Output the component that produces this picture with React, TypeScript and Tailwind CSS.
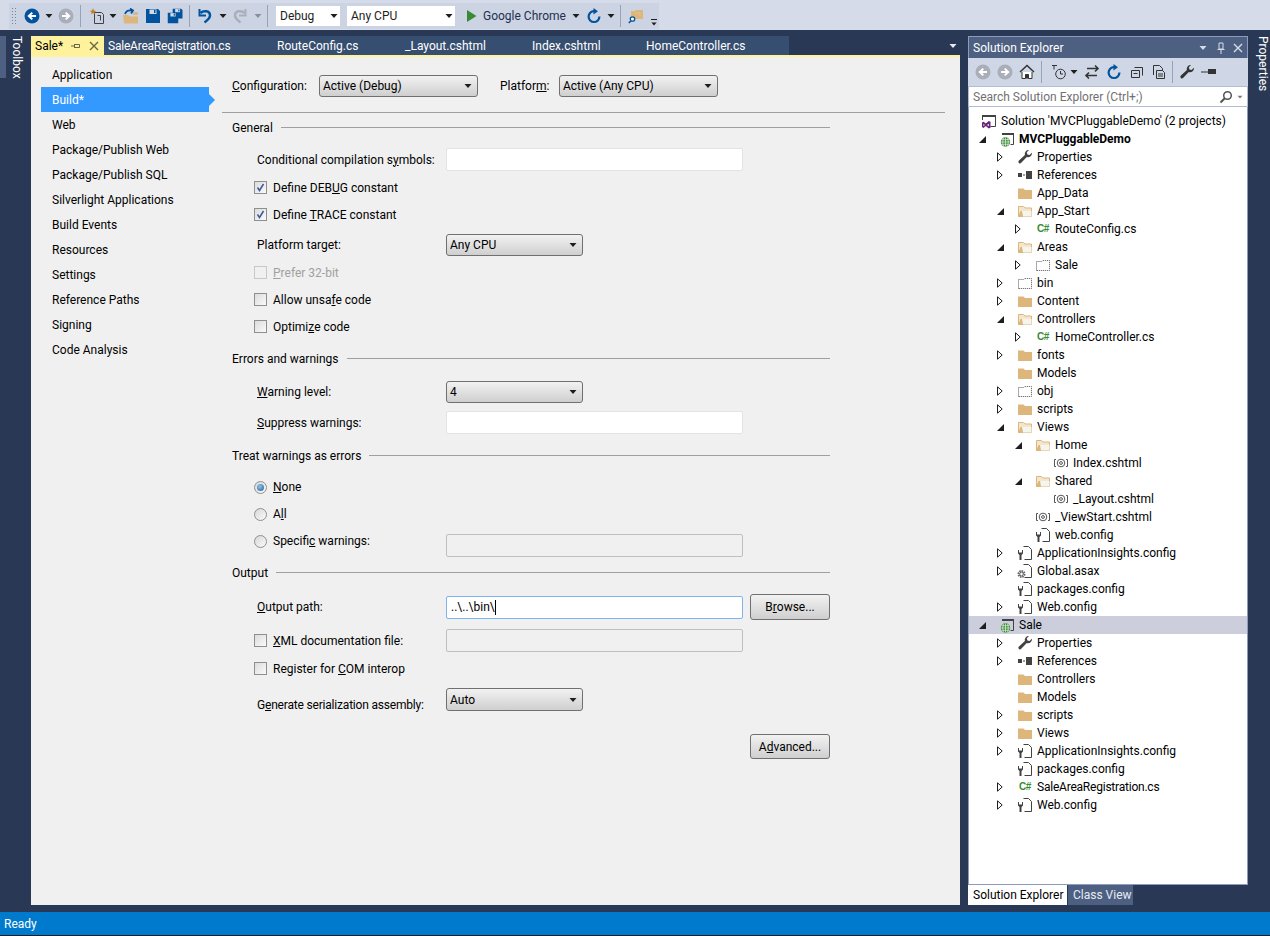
import type { ReactNode } from 'react';

type Kind = 'project' | 'wrench' | 'refs' | 'folder' | 'open' | 'cs' | 'dotted' | 'cshtml' | 'config' | 'asax' | 'solution';
type Arrow = 'open' | 'closed' | null;

interface TreeRow {
  depth: number;
  label: string;
  kind: Kind;
  arrow: Arrow;
  bold?: boolean;
  selected?: boolean;
  tight?: boolean;
}

const TREE: TreeRow[] = [
  { depth: -1, label: "Solution 'MVCPluggableDemo' (2 projects)", kind: 'solution', arrow: null },
  { depth: 0, label: 'MVCPluggableDemo', kind: 'project', arrow: 'open', bold: true },
  { depth: 1, label: 'Properties', kind: 'wrench', arrow: 'closed' },
  { depth: 1, label: 'References', kind: 'refs', arrow: 'closed' },
  { depth: 1, label: 'App_Data', kind: 'folder', arrow: null },
  { depth: 1, label: 'App_Start', kind: 'open', arrow: 'open' },
  { depth: 2, label: 'RouteConfig.cs', kind: 'cs', arrow: 'closed' },
  { depth: 1, label: 'Areas', kind: 'open', arrow: 'open' },
  { depth: 2, label: 'Sale', kind: 'dotted', arrow: 'closed' },
  { depth: 1, label: 'bin', kind: 'dotted', arrow: 'closed' },
  { depth: 1, label: 'Content', kind: 'folder', arrow: 'closed' },
  { depth: 1, label: 'Controllers', kind: 'open', arrow: 'open' },
  { depth: 2, label: 'HomeController.cs', kind: 'cs', arrow: 'closed' },
  { depth: 1, label: 'fonts', kind: 'folder', arrow: 'closed' },
  { depth: 1, label: 'Models', kind: 'folder', arrow: null },
  { depth: 1, label: 'obj', kind: 'dotted', arrow: 'closed' },
  { depth: 1, label: 'scripts', kind: 'folder', arrow: 'closed' },
  { depth: 1, label: 'Views', kind: 'open', arrow: 'open' },
  { depth: 2, label: 'Home', kind: 'open', arrow: 'open' },
  { depth: 3, label: 'Index.cshtml', kind: 'cshtml', arrow: null },
  { depth: 2, label: 'Shared', kind: 'open', arrow: 'open' },
  { depth: 3, label: '_Layout.cshtml', kind: 'cshtml', arrow: null },
  { depth: 2, label: '_ViewStart.cshtml', kind: 'cshtml', arrow: null },
  { depth: 2, label: 'web.config', kind: 'config', arrow: null },
  { depth: 1, label: 'ApplicationInsights.config', kind: 'config', arrow: 'closed' },
  { depth: 1, label: 'Global.asax', kind: 'asax', arrow: 'closed' },
  { depth: 1, label: 'packages.config', kind: 'config', arrow: null },
  { depth: 1, label: 'Web.config', kind: 'config', arrow: 'closed' },
  { depth: 0, label: 'Sale', kind: 'project', arrow: 'open', selected: true },
  { depth: 1, label: 'Properties', kind: 'wrench', arrow: 'closed' },
  { depth: 1, label: 'References', kind: 'refs', arrow: 'closed' },
  { depth: 1, label: 'Controllers', kind: 'folder', arrow: null },
  { depth: 1, label: 'Models', kind: 'folder', arrow: null },
  { depth: 1, label: 'scripts', kind: 'folder', arrow: 'closed' },
  { depth: 1, label: 'Views', kind: 'folder', arrow: 'closed' },
  { depth: 1, label: 'ApplicationInsights.config', kind: 'config', arrow: 'closed' },
  { depth: 1, label: 'packages.config', kind: 'config', arrow: null },
  { depth: 1, label: 'SaleAreaRegistration.cs', kind: 'cs', arrow: 'closed', tight: true },
  { depth: 1, label: 'Web.config', kind: 'config', arrow: 'closed' },
];

const NAV = [
  'Application', 'Build*', 'Web', 'Package/Publish Web', 'Package/Publish SQL', 'Silverlight Applications',
  'Build Events', 'Resources', 'Settings', 'Reference Paths', 'Signing', 'Code Analysis',
];

const BLUE = '#00539c';
const GREY = '#a9aeb8';
const TAN = '#dcb67a';

function Ico({ children, className = '' }: { children: ReactNode; className?: string }) {
  return (
    <svg viewBox="0 0 16 16" width="16" height="16" className={`shrink-0 ${className}`}>
      {children}
    </svg>
  );
}

function Caret({ className = '', color = '#1e1e1e' }: { className?: string; color?: string }) {
  return (
    <svg viewBox="0 0 8 4" width="8" height="4" className={`shrink-0 ${className}`}>
      <path d="M0.5 0H7.5L4 4Z" fill={color} />
    </svg>
  );
}

function CircleArrow({ color, dir }: { color: string; dir: 'left' | 'right' }) {
  return (
    <>
      <circle cx="8" cy="8" r="7.5" fill={color} />
      <path
        d={dir === 'left' ? 'M12 8H5.5M8.3 4.6 4.8 8l3.5 3.4' : 'M4 8h6.5M7.7 4.6 11.2 8l-3.5 3.4'}
        fill="none"
        stroke="#fff"
        strokeWidth="2"
      />
    </>
  );
}

function Floppy({ x = 0, y = 0, s = 1 }: { x?: number; y?: number; s?: number }) {
  return (
    <g transform={`translate(${x} ${y}) scale(${s})`}>
      <path d="M1 1h12l2 2v12H1Z" fill={BLUE} />
      <path d="M4.5 1.5h7v4.5h-7Z" fill="#d3dbe9" />
      <path d="M9 2h1.5v3H9Z" fill={BLUE} />
    </g>
  );
}

function RefreshIcon() {
  return (
    <>
      <path d="M8 3.200A5.400 5.400 0 1 0 13.400 8.600" fill="none" stroke={BLUE} strokeWidth="2.200" />
      <path d="M7.500 0v6.500L12 3.200Z" fill={BLUE} />
    </>
  );
}

function Sep({ className = '' }: { className?: string }) {
  return <div className={`w-px h-[22px] bg-[#9aa3b5] shrink-0 ${className}`} />;
}

function WrenchPath({ color = '#424242' }: { color?: string }) {
  return (
    <path
      d="M15 4.2a3.9 3.9 0 0 1-5.2 3.7L4 14a1.6 1.6 0 0 1-2.3-2.2L7.9 6A3.9 3.9 0 0 1 12 1l-2.2 2.2.6 2.2 2.2.6L14.800 3.800Z"
      fill={color}
    />
  );
}

function PageOutline() {
  return <path d="M6.500 1.500h5l3 3v10h-7" fill="#fff" stroke="#424242" strokeWidth="1" />;
}

function TreeIcon({ kind }: { kind: Kind }) {
  switch (kind) {
    case 'solution':
      return (
        <Ico>
          <path d="M1.500 7V2.500h13v11h-5" fill="none" stroke="#424242" />
          <path d="M1 2h14v2H1Z" fill="#424242" />
          <path
            fillRule="evenodd"
            d="M1 9.500l1.500-.8 2.300 1.800 3-2.500 1.700.8v6l-1.700.8-3-2.500-2.300 1.800-1.500-.8ZM2.500 10.800v2.400l1.300-1.200ZM6 12l1.800 1.300v-2.600Z"
            fill="#68217a"
          />
        </Ico>
      );
    case 'project':
      return (
        <Ico>
          <path d="M3.500 2.500h11v11h-3" fill="none" stroke="#424242" />
          <path d="M3 2h12v2H3Z" fill="#424242" />
          <circle cx="6.500" cy="11" r="4.700" fill="#388a34" />
          <path d="M2 11h9M2.800 8.700h7.400M2.800 13.300h7.400M6.500 6.500v9M4.500 7c-1 2.500-1 5.500 0 8M8.500 7c1 2.500 1 5.500 0 8" stroke="#fff" strokeWidth="0.6" fill="none" />
        </Ico>
      );
    case 'wrench':
      return <Ico><WrenchPath /></Ico>;
    case 'refs':
      return (
        <Ico>
          <path d="M1 6h4v4H1Zm8-2h6v8H9Z" fill="#424242" />
          <path d="M6 8h2" stroke="#424242" />
        </Ico>
      );
    case 'folder':
      return (
        <Ico>
          <path d="M1 3.500h5.500l1.500 1.500h7v9H1Z" fill={TAN} />
        </Ico>
      );
    case 'open':
      return (
        <Ico>
          <path d="M1.500 13.500v-10h5l1.500 1.500h6.500v8.500Z" fill="#f3e6cf" stroke={TAN} />
          <path d="M1 14l2.500-6H11l3 0-2 6Z" fill={TAN} />
          <path d="M5 8h9.500v5.500H6Z" fill="#f5f5f0" />
        </Ico>
      );
    case 'cs':
      return (
        <div className="w-4 h-4 flex items-center justify-center text-[#388a34] text-[10px] font-bold leading-none tracking-[-0.5px] [font-family:'Liberation_Sans',sans-serif]">
          C#
        </div>
      );
    case 'dotted':
      return (
        <Ico>
          <path d="M1.500 13.500v-9h5l1.500-1h6.500v10Z" fill="none" stroke="#555" strokeDasharray="1 1" />
        </Ico>
      );
    case 'cshtml':
      return (
        <Ico>
          <path d="M3 4.500H1.500v7H3M13 4.500h1.500v7H13" fill="none" stroke="#555" />
          <circle cx="8" cy="8" r="3.800" fill="none" stroke="#555" />
          <circle cx="8" cy="8" r="1.400" fill="none" stroke="#555" />
        </Ico>
      );
    case 'config':
      return (
        <Ico>
          <PageOutline />
          <path d="M1 5v3.500l1.500 1.500v5h2v-5L6 8.500V5H5v2.500H2V5Z" fill="#424242" />
        </Ico>
      );
    case 'asax':
      return (
        <Ico>
          <PageOutline />
          <circle cx="4.500" cy="11" r="3" fill="none" stroke="#656565" strokeWidth="2" strokeDasharray="1.500 0.800" />
          <circle cx="4.500" cy="11" r="1.800" fill="none" stroke="#656565" />
        </Ico>
      );
  }
}

function TreeItem({ row }: { row: TreeRow }) {
  return (
    <div
      className={`h-[18px] flex items-center ${row.selected ? 'bg-[#ccceDB]' : ''}`}
      style={{ paddingLeft: Math.max(row.depth * 18 + 4, 4) }}
    >
      {row.depth >= 0 && (
        <div className="w-[18px] flex justify-center shrink-0">
          {row.arrow === 'open' && (
            <svg viewBox="0 0 7 7" width="7" height="7">
              <path d="M7 0V7H0Z" fill="#1e1e1e" />
            </svg>
          )}
          {row.arrow === 'closed' && (
            <svg viewBox="0 0 6 10" width="6" height="10">
              <path d="M0.500 0.800 5.200 5 0.500 9.200Z" fill="#fff" stroke="#1e1e1e" />
            </svg>
          )}
        </div>
      )}
      <div className="ml-2 mr-1 w-4 h-4 shrink-0">
        <TreeIcon kind={row.kind} />
      </div>
      <span className={`whitespace-nowrap text-black ${row.bold ? 'font-bold' : ''} ${row.tight ? 'tracking-[-0.22px]' : ''}`}>
        {row.label}
      </span>
    </div>
  );
}

function Toolbar() {
  return (
    <div className="h-[30px] bg-[#d6dbe9] shrink-0 pt-[3px]">
      <div className="ml-[9px] w-[650px] h-[26px] bg-[#ccd4e4] flex items-center pl-[2px]">
        <div className="w-[6px] h-[18px] bg-[radial-gradient(#7a8499_1px,transparent_1px)] bg-[length:3px_3px] shrink-0" />
        <Ico className="ml-[7px]"><CircleArrow color={BLUE} dir="left" /></Ico>
        <Caret className="ml-[5px]" />
        <Ico className="ml-[5px]"><CircleArrow color={GREY} dir="right" /></Ico>
        <Sep className="ml-[6px]" />
        <Ico className="ml-[8px]">
          <path d="M5.500 4.500h7l2 2v9h-9Z" fill="none" stroke="#424242" />
          <path d="M8.500 7.500h3v5" fill="none" stroke="#424242" />
          <path d="M4 0l.8 2.400L7.500 3l-2.200 1L6 6.500 4 5 2 6.500l.7-2.500L.500 3l2.700-.6Z" fill="#c27d1a" />
        </Ico>
        <Caret className="ml-1" />
        <Ico className="ml-[6px]">
          <path d="M0 7h5l1.500 1.500H15v7H1Z" fill={TAN} />
          <path d="M2 6c1-3 4-4 7-3.500M7 0.500 10 2.500 8 5.500" fill="none" stroke="#00539c" strokeWidth="1.800" />
          <path d="M10 4h5v3h-5Z" fill="#d3a663" opacity="0.6" />
        </Ico>
        <Ico className="ml-[6px]"><Floppy /></Ico>
        <Ico className="ml-[6px]">
          <Floppy x={5} y={0} s={0.7} />
          <Floppy x={0} y={4} s={0.75} />
        </Ico>
        <Sep className="ml-[6px]" />
        <Ico className="ml-[7px]">
          <path d="M3.500 5C6 2.500 13 2 13 7.500c0 3-3 5-5.500 7" fill="none" stroke={BLUE} strokeWidth="2.500" />
          <path d="M2.500 1v6.500H9" fill="none" stroke={BLUE} strokeWidth="2" />
        </Ico>
        <Caret className="ml-[6px]" />
        <Ico className="ml-[5px]">
          <path d="M12.500 5C10 2.500 3 2 3 7.500c0 3 3 5 5.500 7" fill="none" stroke={GREY} strokeWidth="2.500" />
          <path d="M13.500 1v6.500H7" fill="none" stroke={GREY} strokeWidth="2" />
        </Ico>
        <Caret className="ml-[6px]" color="#8a8f99" />
        <Sep className="ml-[5px]" />
        <div className="ml-2 w-16 h-5 bg-white flex items-center justify-between pl-1 pr-[2px] text-[#1e1e1e]">
          Debug
          <Caret />
        </div>
        <div className="ml-[7px] w-[108px] h-5 bg-white flex items-center justify-between pl-1 pr-[2px] text-[#1e1e1e]">
          Any CPU
          <Caret />
        </div>
        <Ico className="ml-2">
          <path d="M4 2 13.500 8 4 14Z" fill="#388a34" />
        </Ico>
        <span className="ml-1 w-[84px] whitespace-nowrap text-[#1e3050]">Google Chrome</span>
        <Caret className="ml-[5px]" />
        <Ico className="ml-[6px]"><RefreshIcon /></Ico>
        <Caret className="ml-[5px]" />
        <Sep className="ml-[5px]" />
        <Ico className="ml-[7px]">
          <path d="M3 3h4l1-1h7v9H3Z" fill={TAN} />
          <path d="M7 5h5v3" fill="none" stroke="#e4c48f" />
          <circle cx="4.500" cy="11" r="2.200" fill="#fff" stroke={BLUE} strokeWidth="1.300" />
          <path d="M3 12.800 0.800 15" stroke={BLUE} strokeWidth="1.500" />
        </Ico>
        <div className="ml-[7px] w-[6px] self-end pb-[3px] flex flex-col gap-[2px] shrink-0">
          <div className="h-px bg-[#1e1e1e]" />
          <Caret className="w-[6px]" />
        </div>
      </div>
    </div>
  );
}

function VerticalTab({ label }: { label: string }) {
  return <div className="text-white [writing-mode:vertical-rl] whitespace-nowrap leading-none">{label}</div>;
}

function DocTabs() {
  return (
    <div className="h-[19px] flex items-center shrink-0">
      <div className="w-[758px] h-full bg-[#364e6f] flex items-center text-white">
        <div className="w-[73px] h-full bg-[#fff29d] text-black flex items-center pl-1 shrink-0">
          <span>Sale*</span>
          <svg viewBox="0 0 10 10" width="10" height="10" className="ml-[8px]">
            <path d="M0 5h3M3.500 3v4M3.500 3.500h5v3h-5" fill="none" stroke="#6b6840" />
          </svg>
          <svg viewBox="0 0 10 10" width="10" height="10" className="ml-2">
            <path d="M1 1l8 8M9 1l-8 8" stroke="#6b6840" strokeWidth="1.400" />
          </svg>
        </div>
        <div className="w-[169px] pl-1 shrink-0 whitespace-nowrap tracking-[-0.22px]">SaleAreaRegistration.cs</div>
        <div className="w-[128px] pl-1 shrink-0 whitespace-nowrap">RouteConfig.cs</div>
        <div className="w-[127px] pl-1 shrink-0 whitespace-nowrap">_Layout.cshtml</div>
        <div className="w-[114px] pl-1 shrink-0 whitespace-nowrap">Index.cshtml</div>
        <div className="w-[147px] pl-1 shrink-0 whitespace-nowrap">HomeController.cs</div>
      </div>
      <div className="flex-1 flex justify-end pr-[3px]">
        <Caret color="#e8ebf2" />
      </div>
    </div>
  );
}

function Nav() {
  return (
    <div className="w-[191px] pt-[5px] shrink-0">
      {NAV.map((item) =>
        item === 'Build*' ? (
          <div key={item} className="h-[25px] ml-[10px] flex items-center">
            <div className="w-[168px] h-full bg-[#3399ff] text-white flex items-center pl-[11px]">{item}</div>
            <svg viewBox="0 0 6 12" width="6" height="12">
              <path d="M0 0 6 6 0 12Z" fill="#3399ff" />
            </svg>
          </div>
        ) : (
          <div key={item} className="h-[25px] ml-[10px] flex items-center pl-[11px]">
            {item}
          </div>
        ),
      )}
    </div>
  );
}

function Select({ value, className = '' }: { value: string; className?: string }) {
  return (
    <div
      className={`h-[22px] rounded-[3px] border border-[#707070] bg-gradient-to-b from-[#f2f2f2] to-[#cfcfcf] flex items-center justify-between pl-[3px] pr-[5px] shrink-0 ${className}`}
    >
      <span>{value}</span>
      <Caret />
    </div>
  );
}

function TextBox({ value, disabled, focused }: { value?: ReactNode; disabled?: boolean; focused?: boolean }) {
  return (
    <div
      className={`w-[297px] h-[23px] rounded-[2px] border flex items-center pl-1 shrink-0 ${
        disabled ? 'bg-[#f0f0f0] border-[#bfbfbf]' : focused ? 'bg-white border-[#7eb4ea]' : 'bg-white border-[#e3e3e3]'
      }`}
    >
      {value}
    </div>
  );
}

function PushButton({ children, className = '' }: { children: ReactNode; className?: string }) {
  return (
    <div
      className={`w-20 rounded-[3px] border border-[#707070] bg-gradient-to-b from-[#f2f2f2] to-[#cfcfcf] flex items-center justify-center shrink-0 ${className}`}
    >
      {children}
    </div>
  );
}

function Heading({ label, className }: { label: string; className: string }) {
  return (
    <div className={`h-4 w-[598px] flex items-center gap-2 ${className}`}>
      <span className="whitespace-nowrap mt-[2px]">{label}</span>
      <div className="flex-1 h-px bg-[#a0a0a0]" />
    </div>
  );
}

function Check({ checked, disabled }: { checked?: boolean; disabled?: boolean }) {
  return (
    <div
      className={`w-[13px] h-[13px] border flex items-center justify-center shrink-0 ${
        disabled ? 'border-[#c8c8c8] bg-[#f0f0f0]' : 'border-[#8e8f8f] bg-gradient-to-br from-[#dcdcdc] to-[#fafafa]'
      }`}
    >
      {checked && (
        <svg viewBox="0 0 9 9" width="9" height="9">
          <path d="M1.500 4.500 3.500 7.500 7.500 1" fill="none" stroke="#3a5a9a" strokeWidth="1.500" />
        </svg>
      )}
    </div>
  );
}

function CheckRow({ children, checked, disabled, className }: { children: ReactNode; checked?: boolean; disabled?: boolean; className: string }) {
  return (
    <div className={`h-4 pl-[22px] flex items-center gap-[6px] ${className} ${disabled ? 'text-[#a0a0a0]' : ''}`}>
      <Check checked={checked} disabled={disabled} />
      <span className="mt-[2px]">{children}</span>
    </div>
  );
}

function Radio({ checked }: { checked?: boolean }) {
  return (
    <div className="w-[13px] h-[13px] rounded-full border border-[#8e8f8f] bg-gradient-to-br from-[#d8d8d8] to-[#fafafa] flex items-center justify-center shrink-0">
      {checked && <div className="w-[7px] h-[7px] rounded-full bg-[radial-gradient(circle_at_40%_35%,#8fc4ea,#1c5f9c)]" />}
    </div>
  );
}

function RadioRow({ children, checked, className }: { children: ReactNode; checked?: boolean; className: string }) {
  return (
    <div className={`h-4 pl-[22px] flex items-center gap-[6px] ${className}`}>
      <Radio checked={checked} />
      <span>{children}</span>
    </div>
  );
}

function BuildForm() {
  return (
    <div className="w-[723px] pt-[18px] shrink-0">
      <div className="h-[22px] pl-[10px] flex items-center">
        <span className="w-[87px]"><u>C</u>onfiguration:</span>
        <Select value="Active (Debug)" className="w-[159px]" />
        <span className="ml-[22px] w-[59px]">Platfor<u>m</u>:</span>
        <Select value="Active (Any CPU)" className="w-[159px]" />
      </div>
      <div className="mt-[15px] h-px bg-[#a0a0a0]" />

      <div className="pl-[10px]">
        <Heading label="General" className="mt-[6px]" />
        <div className="mt-[13px] pl-[25px] flex items-center">
          <span className="w-[189px]">Conditional compilation s<u>y</u>mbols:</span>
          <TextBox />
        </div>
        <CheckRow checked className="mt-2">Define DEB<u>U</u>G constant</CheckRow>
        <CheckRow checked className="mt-[11px]">Define <u>T</u>RACE constant</CheckRow>
        <div className="mt-3 pl-[25px] flex items-center">
          <span className="w-[189px]">Platform tar<u>g</u>et:</span>
          <Select value="Any CPU" className="w-[137px]" />
        </div>
        <CheckRow disabled className="mt-2"><u>P</u>refer 32-bit</CheckRow>
        <CheckRow className="mt-[11px]">Allow unsa<u>f</u>e code</CheckRow>
        <CheckRow className="mt-[11px]">Optimi<u>z</u>e code</CheckRow>

        <Heading label="Errors and warnings" className="mt-4" />
        <div className="mt-[15px] pl-[25px] flex items-center">
          <span className="w-[189px]"><u>W</u>arning level:</span>
          <Select value="4" className="w-[137px]" />
        </div>
        <div className="mt-[8px] pl-[25px] flex items-center">
          <span className="w-[189px]"><u>S</u>uppress warnings:</span>
          <TextBox />
        </div>

        <Heading label="Treat warnings as errors" className="mt-[13px]" />
        <RadioRow checked className="mt-4"><u>N</u>one</RadioRow>
        <RadioRow className="mt-[11px]">A<u>l</u>l</RadioRow>
        <div className="mt-[11px] flex items-start">
          <RadioRow className="w-[214px]">Specifi<u>c</u> warnings:</RadioRow>
          <div className="mt-px"><TextBox disabled /></div>
        </div>

        <Heading label="Output" className="mt-[7px]" />
        <div className="mt-[14px] pl-[25px] flex items-center">
          <span className="w-[189px]"><u>O</u>utput path:</span>
          <TextBox
            focused
            value={
              <span className="flex items-center">
                ..\..\bin\
                <span className="w-px h-[15px] bg-black" />
              </span>
            }
          />
          <PushButton className="ml-[7px] h-[26px]">B<u>r</u>owse...</PushButton>
        </div>
        <div className="mt-[9px] flex items-center h-[23px]">
          <div className="w-[214px] pl-[22px] flex items-center gap-[6px]">
            <Check />
            <span><u>X</u>ML documentation file:</span>
          </div>
          <TextBox disabled />
        </div>
        <CheckRow className="mt-2">Register for <u>C</u>OM interop</CheckRow>
        <div className="mt-3 pl-[25px] flex items-start">
          <span className="w-[189px] mt-[9px] tracking-[-0.19px] whitespace-nowrap">G<u>e</u>nerate serialization assembly:</span>
          <Select value="Auto" className="w-[137px] h-[23px]" />
        </div>
        <div className="mt-[21px] flex justify-start pl-[518px]">
          <PushButton className="h-[25px]">A<u>d</u>vanced...</PushButton>
        </div>
      </div>
    </div>
  );
}

function SolutionExplorer() {
  return (
    <div className="w-[280px] flex flex-col shrink-0">
      <div className="h-[22px] bg-[#4d6082] border-t border-x border-[#8e9bbc] flex items-center pl-[4px] pr-[4px] text-white shrink-0">
        <span className="flex-1">Solution Explorer</span>
        <Caret color="#d6dbe9" />
        <svg viewBox="0 0 10 12" width="10" height="12" className="ml-[9px]">
          <path d="M3 1h4v6H3ZM1.500 7.500h7M5 8v4" fill="none" stroke="#d6dbe9" />
        </svg>
        <svg viewBox="0 0 10 10" width="10" height="10" className="ml-[7px]">
          <path d="M1 1l8 8M9 1l-8 8" stroke="#d6dbe9" strokeWidth="1.400" />
        </svg>
      </div>
      <div className="h-[28px] bg-[#cfd6e5] flex items-center pl-[7px] shrink-0">
        <Ico><CircleArrow color={GREY} dir="left" /></Ico>
        <Ico className="ml-[6px]"><CircleArrow color={GREY} dir="right" /></Ico>
        <Ico className="ml-[6px]">
          <path d="M1 8 8 1.500 15 8" fill="none" stroke="#333" strokeWidth="1.500" />
          <path d="M3 8v6.500h3.500v-4h3v4H13V8" fill="#fff" stroke="#333" />
          <path d="M6.500 10.500h3v4h-3Z" fill="#333" />
        </Ico>
        <Sep className="ml-[6px]" />
        <Ico className="ml-[9px]">
          <circle cx="9.500" cy="10" r="4.800" fill="none" stroke="#333" />
          <path d="M9.500 7v3h2.500M1 1.500h5M3 1.500v4" fill="none" stroke="#333" />
        </Ico>
        <Caret className="ml-[3px]" />
        <Ico className="ml-[6px]">
          <path d="M3 4.500h11M11 1.500l3 3-3 3M13 11.500H2M5 8.500l-3 3 3 3" fill="none" stroke="#333" strokeWidth="1.600" />
        </Ico>
        <Ico className="ml-[6px]"><RefreshIcon /></Ico>
        <Ico className="ml-[7px]">
          <path d="M5.500 3.500h8v8M2.500 6.500h8v7h-8Z" fill="none" stroke="#333" />
          <path d="M4.500 9.500h4" stroke="#333" />
        </Ico>
        <Ico className="ml-[5px]">
          <path d="M3.500 11V1.500h6l3 3v2M6.500 6.500h6l2 2v6h-8Z" fill="none" stroke="#333" />
          <path d="M8 10h5M8 12h5" stroke="#333" />
        </Ico>
        <Sep className="ml-[6px]" />
        <Ico className="ml-[6px]"><WrenchPath color="#333" /></Ico>
        <svg viewBox="0 0 16 6" width="16" height="6" className="ml-[6px]">
          <path d="M0 3h8" stroke="#333" />
          <path d="M7 0h8v5H7Z" fill="#333" />
        </svg>
      </div>
      <div className="h-[21px] bg-white border border-[#b4bcd0] flex items-center pl-1 pr-[3px] text-[#717171] shrink-0">
        <span className="flex-1">Search Solution Explorer (Ctrl+;)</span>
        <svg viewBox="0 0 14 14" width="14" height="14">
          <circle cx="8.500" cy="5.500" r="3.800" fill="none" stroke="#555" strokeWidth="1.500" />
          <path d="M5.800 8.200 1.500 12.500" stroke="#555" strokeWidth="2" />
        </svg>
        <Caret className="ml-[3px] scale-75" color="#777" />
      </div>
      <div className="flex-1 bg-white pt-[5px] border-x border-b border-[#8e9bbc]">
        {TREE.map((row, i) => (
          <TreeItem key={i} row={row} />
        ))}
      </div>
      <div className="h-5 flex shrink-0">
        <div className="w-[99px] bg-white text-black flex items-center pl-[5px] whitespace-nowrap">Solution Explorer</div>
        <div className="ml-px w-[65px] bg-[#4d6082] text-[#e8ebf2] flex items-center pl-[5px] whitespace-nowrap">Class View</div>
      </div>
    </div>
  );
}

export default function App() {
  return (
    <div className="w-[1270px] h-[936px] overflow-hidden flex flex-col bg-[#293955] text-xs text-black [font-family:Roboto,'Liberation_Sans',sans-serif]">
      <Toolbar />
      <div className="flex-1 flex min-h-0">
        <div className="w-[31px] pt-[6px] flex items-start shrink-0">
          <div className="w-[6px] h-[42px] bg-[#4d6082]" />
          <div className="ml-[5px]">
            <VerticalTab label="Toolbox" />
          </div>
        </div>
        <div className="w-[929px] flex flex-col pt-[6px] pb-[7px] shrink-0">
          <DocTabs />
          <div className="flex-1 flex bg-[#f0f0f0] border-t-2 border-[#fff29d]">
            <Nav />
            <BuildForm />
          </div>
        </div>
        <div className="ml-2 pt-[6px] pb-[7px] flex">
          <SolutionExplorer />
        </div>
        <div className="flex-1 pt-[6px] pl-[9px]">
          <VerticalTab label="Properties" />
        </div>
      </div>
      <div className="h-6 bg-[#007acc] border-b border-[#1a1a1a] text-white flex items-center pl-1 shrink-0">Ready</div>
    </div>
  );
}
